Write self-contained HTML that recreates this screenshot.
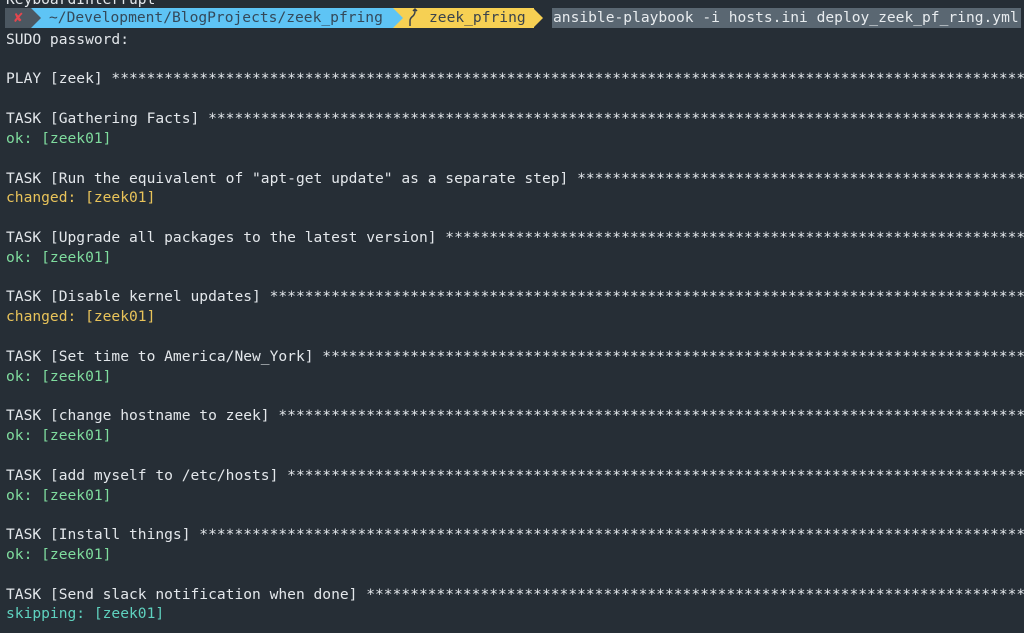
<!DOCTYPE html>
<html><head><meta charset="utf-8"><style>
html,body{margin:0;padding:0;background:#262e36;width:1024px;height:633px;overflow:hidden}
#t{position:absolute;left:6px;top:-9.8px;font-family:"DejaVu Sans Mono","Liberation Mono",monospace;font-size:14.6px;line-height:19.82px;color:#e3e7eb;width:1018px;overflow:hidden}
.l{height:19.82px;overflow:hidden;white-space:pre}
.g{color:#7fdc9e}.y{color:#e8c35a}.s{color:#5fd2bf}
.seg{position:absolute;top:8px;height:20px;font-family:"DejaVu Sans Mono","Liberation Mono",monospace;font-size:14.6px;line-height:20px;white-space:pre}
</style></head><body>
<div id="t">
<div class="l">KeyboardInterrupt</div>
<div class="l"> </div>
<div class="l">SUDO password:</div>
<div class="l"> </div>
<div class="l">PLAY [zeek] **************************************************************************************************************</div>
<div class="l"> </div>
<div class="l">TASK [Gathering Facts] *******************************************************************************************************</div>
<div class="l g">ok: [zeek01]</div>
<div class="l"> </div>
<div class="l">TASK [Run the equivalent of "apt-get update" as a separate step] *************************************************************</div>
<div class="l y">changed: [zeek01]</div>
<div class="l"> </div>
<div class="l">TASK [Upgrade all packages to the latest version] ****************************************************************************</div>
<div class="l g">ok: [zeek01]</div>
<div class="l"> </div>
<div class="l">TASK [Disable kernel updates] ************************************************************************************************</div>
<div class="l y">changed: [zeek01]</div>
<div class="l"> </div>
<div class="l">TASK [Set time to America/New_York] ******************************************************************************************</div>
<div class="l g">ok: [zeek01]</div>
<div class="l"> </div>
<div class="l">TASK [change hostname to zeek] ***********************************************************************************************</div>
<div class="l g">ok: [zeek01]</div>
<div class="l"> </div>
<div class="l">TASK [add myself to /etc/hosts] **********************************************************************************************</div>
<div class="l g">ok: [zeek01]</div>
<div class="l"> </div>
<div class="l">TASK [Install things] ********************************************************************************************************</div>
<div class="l g">ok: [zeek01]</div>
<div class="l"> </div>
<div class="l">TASK [Send slack notification when done] *************************************************************************************</div>
<div class="l s">skipping: [zeek01]</div>
</div>
<svg style="position:absolute;left:0;top:0" width="1024" height="40">
<rect x="0" y="7.5" width="1024" height="21" fill="#262e36"/>
<rect x="5" y="8" width="30" height="20" fill="#4c5761"/>
<rect x="31" y="8" width="364" height="20" fill="#5ec4f5"/>
<polygon points="31,8 41,18 31,28" fill="#4c5761"/>
<rect x="393" y="8" width="141" height="20" fill="#f6d053"/>
<polygon points="393,8 403,18 393,28" fill="#5ec4f5"/>
<polygon points="533,8 543,18 533,28" fill="#f6d053"/>
<rect x="552" y="8" width="469" height="20" fill="#5a6772"/>
<path d="M410 26 L410 21 Q410 18 413 16 Q415 14 415 11 L415 9 M413 11 L415 9 L417 11" stroke="#3a434c" stroke-width="1.5" fill="none"/>
</svg>
<div class="seg" style="left:14px;color:#e4464e;font-weight:bold">✘</div>
<div class="seg" style="left:49px;color:#34495a">~/Development/BlogProjects/zeek_pfring</div>
<div class="seg" style="left:429px;color:#3a434c">zeek_pfring</div>
<div class="seg" style="left:553px;color:#e8ecef">ansible-playbook -i hosts.ini deploy_zeek_pf_ring.yml</div>
</body></html>
